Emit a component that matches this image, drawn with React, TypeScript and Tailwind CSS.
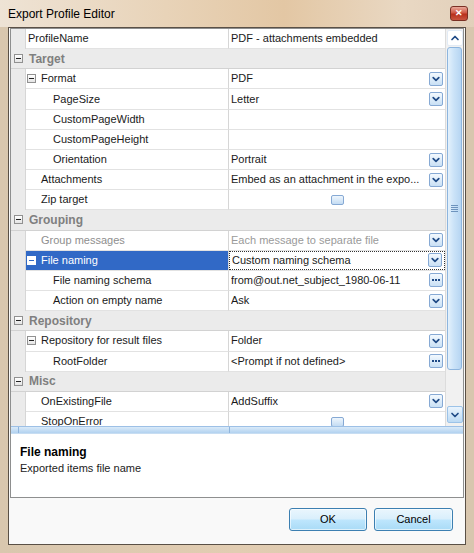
import React from "react";

type Row =
  | { kind: "cat"; label: string }
  | {
      kind: "prop";
      label: string;
      depth: 0 | 1 | 2;
      expander?: boolean;
      value?: string;
      btn?: "drop" | "dots" | "check";
      disabled?: boolean;
      selected?: boolean;
    };

const rows: Row[] = [
  { kind: "prop", label: "ProfileName", depth: 0, value: "PDF - attachments embedded" },
  { kind: "cat", label: "Target" },
  { kind: "prop", label: "Format", depth: 1, expander: true, value: "PDF", btn: "drop" },
  { kind: "prop", label: "PageSize", depth: 2, value: "Letter", btn: "drop" },
  { kind: "prop", label: "CustomPageWidth", depth: 2 },
  { kind: "prop", label: "CustomPageHeight", depth: 2 },
  { kind: "prop", label: "Orientation", depth: 2, value: "Portrait", btn: "drop" },
  { kind: "prop", label: "Attachments", depth: 1, value: "Embed as an attachment in the expo...", btn: "drop" },
  { kind: "prop", label: "Zip target", depth: 1, btn: "check" },
  { kind: "cat", label: "Grouping" },
  { kind: "prop", label: "Group messages", depth: 1, value: "Each message to separate file", btn: "drop", disabled: true },
  { kind: "prop", label: "File naming", depth: 1, expander: true, value: "Custom naming schema", btn: "drop", selected: true },
  { kind: "prop", label: "File naming schema", depth: 2, value: "from@out.net_subject_1980-06-11", btn: "dots" },
  { kind: "prop", label: "Action on empty name", depth: 2, value: "Ask", btn: "drop" },
  { kind: "cat", label: "Repository" },
  { kind: "prop", label: "Repository for result files", depth: 1, expander: true, value: "Folder", btn: "drop" },
  { kind: "prop", label: "RootFolder", depth: 2, value: "<Prompt if not defined>", btn: "dots" },
  { kind: "cat", label: "Misc" },
  { kind: "prop", label: "OnExistingFile", depth: 1, value: "AddSuffix", btn: "drop" },
  { kind: "prop", label: "StopOnError", depth: 1, btn: "check" },
];

function Minus({ inverted }: { inverted?: boolean }) {
  return (
    <div
      className={
        inverted
          ? "w-[9px] h-[9px] shrink-0 bg-white border border-white flex items-center justify-center"
          : "w-[9px] h-[9px] shrink-0 border border-[#919191] bg-[linear-gradient(#ffffff,#e4e4e4)] flex items-center justify-center"
      }
    >
      <div className={inverted ? "w-[5px] h-[1px] bg-[#3169c6]" : "w-[5px] h-[1px] bg-[#222]"} />
    </div>
  );
}

function DropBtn() {
  return (
    <div className="w-[14px] h-[14px] shrink-0 rounded-[2px] border border-[#86a9d4] bg-[linear-gradient(#f3f9fe,#c9e0f5)] flex items-center justify-center">
      <svg width="12" height="12" viewBox="0 0 12 12">
        <path d="M3.2 4.6 L6 7.4 L8.8 4.6" fill="none" stroke="#1f4a86" strokeWidth="1.7" strokeLinecap="round" strokeLinejoin="round" />
      </svg>
    </div>
  );
}

function DotsBtn() {
  return (
    <div className="w-[14px] h-[14px] shrink-0 rounded-[2px] border border-[#86a9d4] bg-[linear-gradient(#f3f9fe,#c9e0f5)] flex items-center justify-center gap-[1px]">
      <div className="w-[2px] h-[2px] bg-[#1f4a86]" />
      <div className="w-[2px] h-[2px] bg-[#1f4a86]" />
      <div className="w-[2px] h-[2px] bg-[#1f4a86]" />
    </div>
  );
}

function CheckBtn() {
  return (
    <div className="w-[13px] h-[10px] rounded-[2px] border border-[#86a9d4] bg-[linear-gradient(#eef6fd,#c4dcf3)]" />
  );
}

function CatRow({ label }: { label: string }) {
  return (
    <div className="h-[20.17px] shrink-0 flex items-center bg-[#ebebeb] border-b border-[#d2d2d2]">
      <div className="ml-[3px]">
        <Minus />
      </div>
      <span className="ml-[6px] text-[12px] font-bold text-[#7f7f7f] leading-none">{label}</span>
    </div>
  );
}

function PropRow({ r }: { r: Extract<Row, { kind: "prop" }> }) {
  const pad = r.depth === 0 ? "pl-[2px]" : r.depth === 1 ? (r.expander ? "pl-[1px]" : "pl-[15px]") : "pl-[27px]";
  const labelCls = r.selected
    ? "bg-[#3169c6] text-white"
    : r.disabled
    ? "bg-white text-[#8e8e8e]"
    : "bg-white text-[#1a1a1a]";
  return (
    <div className="h-[20.17px] shrink-0 flex">
      <div className="w-[15px] shrink-0 bg-[#ebebeb] border-r border-[#d6d6d6]" />
      <div className={`w-[202px] shrink-0 flex items-center border-b border-[#e2e2e2] ${pad} ${labelCls}`}>
        {r.expander && (
          <div className="mr-[5px]">
            <Minus inverted={r.selected} />
          </div>
        )}
        <span className="text-[11px] leading-none whitespace-nowrap">{r.label}</span>
      </div>
      <div className="flex-1 border-l border-[#d6d6d6] border-b border-b-[#e2e2e2] bg-white min-w-0">
        <div
          className={`h-full flex items-center pl-[2px] pr-[2px] ${
            r.selected ? "border border-dotted border-[#333]" : ""
          }`}
        >
          {r.btn === "check" ? (
            <div className="flex-1 flex justify-center">
              <CheckBtn />
            </div>
          ) : (
            <>
              <span
                className={`flex-1 min-w-0 text-[11px] leading-none whitespace-nowrap overflow-hidden ${
                  r.disabled ? "text-[#9a9a9a]" : "text-[#1a1a1a]"
                }`}
              >
                {r.value ?? ""}
              </span>
              {r.btn === "drop" && <DropBtn />}
              {r.btn === "dots" && <DotsBtn />}
            </>
          )}
        </div>
      </div>
    </div>
  );
}

export default function App() {
  return (
    <div className="w-[474px] h-[553px] flex flex-col font-['Liberation_Sans',Arial,sans-serif] bg-[linear-gradient(90deg,#d9c7ae,#e2cdb2_50%,#d8c6ae)] overflow-hidden">
      {/* Title bar */}
      <div className="h-[27px] shrink-0 flex items-center justify-between pl-[8px] pr-[6px] bg-[linear-gradient(90deg,#eee3d5_0%,#e8d3b8_35%,#e3c7a4_60%,#e9d8c3_85%,#e2d0bb_100%)]">
        <span className="text-[12px] text-black leading-none">Export Profile Editor</span>
        <div className="w-[18px] h-[15px] rounded-[3px] border border-[#7a3024] bg-[linear-gradient(#e9a99a,#cf5744_45%,#b8301c_55%,#c9543f)] flex items-center justify-center">
          <span className="text-[9px] font-bold text-white leading-none">✕</span>
        </div>
      </div>

      {/* Client area */}
      <div className="flex-1 mx-[8px] mb-[8px] border border-[#5a5046] bg-[#f9f9f9] flex flex-col px-[1px]">
        <div className="h-[470px] shrink-0 border border-[#8e8f8f] bg-white flex flex-col">
          {/* Grid */}
          <div className="h-[397px] shrink-0 flex">
            <div className="flex-1 overflow-hidden flex flex-col">
              {rows.map((r, i) =>
                r.kind === "cat" ? <CatRow key={i} label={r.label} /> : <PropRow key={i} r={r} />
              )}
            </div>
            {/* Scrollbar */}
            <div className="w-[18px] shrink-0 border-l border-[#dcdcdc] bg-[#f1f1f1] flex flex-col items-center">
              <div className="mt-[1px] w-[16px] h-[16px] rounded-[2px] border border-[#e2ebf5] bg-white flex items-center justify-center">
                <svg width="10" height="10" viewBox="0 0 10 10">
                  <path d="M2 6.5 L5 3.5 L8 6.5" fill="none" stroke="#1f4a86" strokeWidth="1.7" strokeLinecap="round" strokeLinejoin="round" />
                </svg>
              </div>
              <div className="mt-[1px] w-[15px] h-[323px] rounded-[3px] border border-[#8db5de] bg-[linear-gradient(90deg,#e4f1fc,#cbe3f8_45%,#b6d5f2)] flex items-center justify-center">
                <div className="flex flex-col gap-[1px]">
                  <div className="w-[7px] h-[1px] bg-[#6d93bd]" />
                  <div className="w-[7px] h-[1px] bg-[#6d93bd]" />
                  <div className="w-[7px] h-[1px] bg-[#6d93bd]" />
                  <div className="w-[7px] h-[1px] bg-[#6d93bd]" />
                </div>
              </div>
              <div className="flex-1" />
              <div className="mb-[3px] w-[16px] h-[17px] rounded-[2px] border border-[#9cc3e8] bg-[linear-gradient(#eaf4fd,#bcdaf4)] flex items-center justify-center">
                <svg width="10" height="10" viewBox="0 0 10 10">
                  <path d="M2 3.5 L5 6.5 L8 3.5" fill="none" stroke="#1f4a86" strokeWidth="1.7" strokeLinecap="round" strokeLinejoin="round" />
                </svg>
              </div>
            </div>
          </div>

          {/* Splitter */}
          <div className="h-[8px] shrink-0 border-t border-[#9dc0e6] border-b border-b-[#c7ddf2] bg-[linear-gradient(#d9eaf9,#b2d2f0)] flex">
            <div className="w-[7px]" />
            <div className="w-[1px] bg-[#8fb4dc]" />
            <div className="w-[210px]" />
            <div className="w-[1px] bg-[#8fb4dc]" />
          </div>

          {/* Help panel */}
          <div className="flex-1 bg-white pl-[9px] pt-[11px]">
            <div className="text-[12px] font-bold text-black leading-[14px]">File naming</div>
            <div className="mt-[3px] text-[11px] text-[#222] leading-[13px]">Exported items file name</div>
          </div>
        </div>

        {/* Buttons */}
        <div className="mt-[10px] flex justify-end gap-[7px] pr-[11px]">
          <button className="w-[78px] h-[23px] rounded-[3px] border border-[#3c7fb1] bg-[linear-gradient(#eaf6fd_0%,#d9effc_48%,#bee6fd_52%,#a9dbf6_100%)] shadow-[inset_0_0_0_1px_rgba(255,255,255,0.6)] text-[11px] text-black">
            OK
          </button>
          <button className="w-[79px] h-[23px] rounded-[3px] border border-[#3c7fb1] bg-[linear-gradient(#eaf6fd_0%,#d9effc_48%,#bee6fd_52%,#a9dbf6_100%)] shadow-[inset_0_0_0_1px_rgba(255,255,255,0.6)] text-[11px] text-black">
            Cancel
          </button>
        </div>
      </div>
    </div>
  );
}
